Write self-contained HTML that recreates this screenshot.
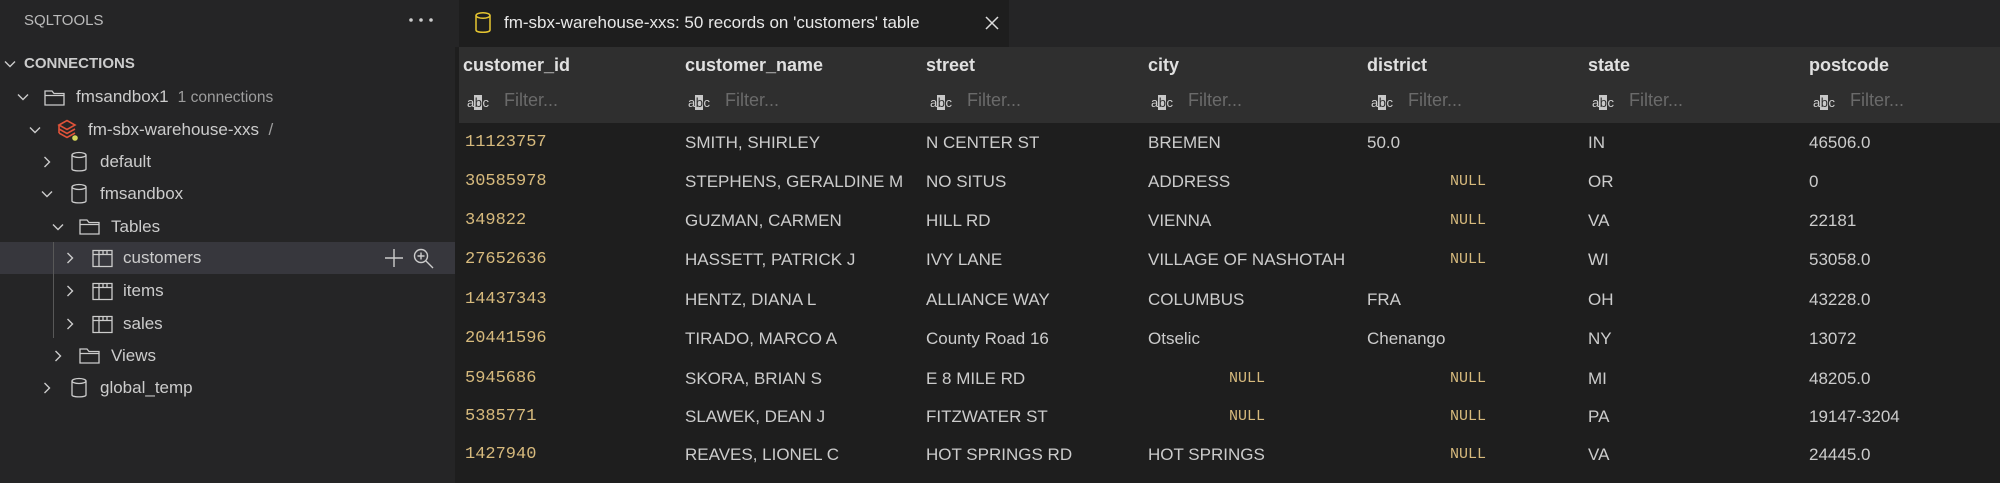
<!DOCTYPE html>
<html><head><meta charset="utf-8"><style>
*{margin:0;padding:0;box-sizing:border-box}
body{width:2000px;height:483px;overflow:hidden;background:#1e1e1e;font-family:"Liberation Sans",sans-serif;color:#cccccc;position:relative}
.a{position:absolute;white-space:nowrap}
#side{position:absolute;left:0;top:0;width:455px;height:483px;background:#252526}
.sr{position:absolute;left:0;width:455px;height:32px;font-size:17px;line-height:32px}
.t{position:absolute;top:0}
.chev{position:absolute;top:9px;width:14px;height:14px}
.ic{position:absolute;top:6px}
#tabbar{position:absolute;left:455px;top:0;width:1545px;height:47px;background:#252526}
#tab{position:absolute;left:459px;top:0;width:550px;height:47px;background:#1e1e1e}
#hdr{position:absolute;left:459px;top:47px;width:1541px;height:76px;background:#2f2f2f}
.hn{position:absolute;top:55px;font-weight:bold;font-size:18px;color:#e0e0e0}
.fi{position:absolute;top:90px;font-size:18px;color:#6a6a6a}
.abc{position:absolute;top:95px;font-size:13px;color:#cfcfcf;letter-spacing:-0.5px}
.abc b{font-weight:normal;background:#c8c8c8;color:#2f2f2f;padding:0 1px}
.c{position:absolute;font-size:17px;color:#cccccc}
.n{position:absolute;font-family:"Liberation Mono",monospace;font-size:17px;color:#d7ba7d}
.nl{position:absolute;font-family:"Liberation Mono",monospace;font-size:15px;color:#d7ba7d}
</style></head><body>
<div id="side">
  <div class="a" style="left:24px;top:12px;font-size:15px;color:#bbbbbb">SQLTOOLS</div>
  <svg class="a" style="left:408px;top:17px" width="26" height="6"><circle cx="3" cy="3" r="1.8" fill="#ccc"/><circle cx="13" cy="3" r="1.8" fill="#ccc"/><circle cx="23" cy="3" r="1.8" fill="#ccc"/></svg>

  <div class="sr" style="top:48px">
    <svg class="chev" style="left:3px" viewBox="0 0 14 14"><path d="M2 4.5 L7 9.5 L12 4.5" stroke="#ccc" stroke-width="1.4" fill="none"/></svg>
    <div class="t" style="left:24px;font-size:15px;font-weight:bold;color:#cccccc">CONNECTIONS</div>
  </div>
  <div class="sr" style="top:81px">
    <svg class="chev" style="left:16px" viewBox="0 0 14 14"><path d="M2 4.5 L7 9.5 L12 4.5" stroke="#ccc" stroke-width="1.4" fill="none"/></svg>
    <svg class="ic" style="left:44px;top:8px" width="22" height="18" viewBox="0 0 22 18"><path d="M1 2 H8 L10 4.5 H20 V16 H1 Z M1 6.5 H20" stroke="#ccc" stroke-width="1.3" fill="none"/></svg>
    <div class="t" style="left:76px">fmsandbox1 <span style="color:#9d9d9d;font-size:15.5px">&nbsp;1 connections</span></div>
  </div>
  <div class="sr" style="top:114px">
    <svg class="chev" style="left:28px" viewBox="0 0 14 14"><path d="M2 4.5 L7 9.5 L12 4.5" stroke="#ccc" stroke-width="1.4" fill="none"/></svg>
    <svg class="ic" style="left:56px;top:4px" width="24" height="24" viewBox="0 0 24 24"><g stroke="#e0533a" stroke-width="1.6" fill="none"><path d="M3 7 L11 2.5 L19 7 L11 11.5 Z"/><path d="M3 11 L11 15.5 L19 11"/><path d="M3 15 L11 19.5 L19 15"/><path d="M3 7 V15"/></g><circle cx="19" cy="20" r="2.8" fill="#d4d45a"/></svg>
    <div class="t" style="left:88px">fm-sbx-warehouse-xxs <span style="color:#9d9d9d">&nbsp;/</span></div>
  </div>
  <div class="sr" style="top:146px">
    <svg class="chev" style="left:40px" viewBox="0 0 14 14"><path d="M4.5 2 L9.5 7 L4.5 12" stroke="#ccc" stroke-width="1.4" fill="none"/></svg>
    <svg class="ic" style="left:70px;top:5px" width="18" height="22" viewBox="0 0 18 22"><path d="M2 4 V18 C2 20.5 16 20.5 16 18 V4" stroke="#ccc" stroke-width="1.3" fill="none"/><ellipse cx="9" cy="4" rx="7" ry="2.5" stroke="#ccc" stroke-width="1.3" fill="none"/></svg>
    <div class="t" style="left:100px">default</div>
  </div>
  <div class="sr" style="top:178px">
    <svg class="chev" style="left:40px" viewBox="0 0 14 14"><path d="M2 4.5 L7 9.5 L12 4.5" stroke="#ccc" stroke-width="1.4" fill="none"/></svg>
    <svg class="ic" style="left:70px;top:5px" width="18" height="22" viewBox="0 0 18 22"><path d="M2 4 V18 C2 20.5 16 20.5 16 18 V4" stroke="#ccc" stroke-width="1.3" fill="none"/><ellipse cx="9" cy="4" rx="7" ry="2.5" stroke="#ccc" stroke-width="1.3" fill="none"/></svg>
    <div class="t" style="left:100px">fmsandbox</div>
  </div>
  <div class="sr" style="top:211px">
    <svg class="chev" style="left:51px" viewBox="0 0 14 14"><path d="M2 4.5 L7 9.5 L12 4.5" stroke="#ccc" stroke-width="1.4" fill="none"/></svg>
    <svg class="ic" style="left:79px;top:7px" width="22" height="18" viewBox="0 0 22 18"><path d="M1 2 H8 L10 4.5 H20 V16 H1 Z M1 6.5 H20" stroke="#ccc" stroke-width="1.3" fill="none"/></svg>
    <div class="t" style="left:111px">Tables</div>
  </div>
  <div class="sr" style="top:242px;background:#37373d">
    <svg class="chev" style="left:63px" viewBox="0 0 14 14"><path d="M4.5 2 L9.5 7 L4.5 12" stroke="#ccc" stroke-width="1.4" fill="none"/></svg>
    <svg class="ic" style="left:92px;top:7px" width="22" height="19" viewBox="0 0 22 19"><path d="M1 1.5 H20 V17.5 H1 Z M1 5.5 H20 M7 1.5 V17.5 M11 1.5 V5.5 M15 1.5 V5.5" stroke="#ccc" stroke-width="1.3" fill="none"/></svg>
    <div class="t" style="left:123px">customers</div>
    <svg class="a" style="left:384px;top:6px" width="20" height="20" viewBox="0 0 20 20"><path d="M10 1 V19 M1 10 H19" stroke="#ccc" stroke-width="1.4"/></svg>
    <svg class="a" style="left:412px;top:5px" width="24" height="24" viewBox="0 0 24 24"><circle cx="9" cy="9" r="6.5" stroke="#ccc" stroke-width="1.4" fill="none"/><path d="M9 5.5 V12.5 M5.5 9 H12.5 M14 14 L21 21" stroke="#ccc" stroke-width="1.4"/></svg>
  </div>
  <div class="a" style="left:53px;top:242px;width:1px;height:96px;background:#585858"></div>
  <div class="sr" style="top:275px">
    <svg class="chev" style="left:63px" viewBox="0 0 14 14"><path d="M4.5 2 L9.5 7 L4.5 12" stroke="#ccc" stroke-width="1.4" fill="none"/></svg>
    <svg class="ic" style="left:92px;top:7px" width="22" height="19" viewBox="0 0 22 19"><path d="M1 1.5 H20 V17.5 H1 Z M1 5.5 H20 M7 1.5 V17.5 M11 1.5 V5.5 M15 1.5 V5.5" stroke="#ccc" stroke-width="1.3" fill="none"/></svg>
    <div class="t" style="left:123px">items</div>
  </div>
  <div class="sr" style="top:308px">
    <svg class="chev" style="left:63px" viewBox="0 0 14 14"><path d="M4.5 2 L9.5 7 L4.5 12" stroke="#ccc" stroke-width="1.4" fill="none"/></svg>
    <svg class="ic" style="left:92px;top:7px" width="22" height="19" viewBox="0 0 22 19"><path d="M1 1.5 H20 V17.5 H1 Z M1 5.5 H20 M7 1.5 V17.5 M11 1.5 V5.5 M15 1.5 V5.5" stroke="#ccc" stroke-width="1.3" fill="none"/></svg>
    <div class="t" style="left:123px">sales</div>
  </div>
  <div class="sr" style="top:340px">
    <svg class="chev" style="left:51px" viewBox="0 0 14 14"><path d="M4.5 2 L9.5 7 L4.5 12" stroke="#ccc" stroke-width="1.4" fill="none"/></svg>
    <svg class="ic" style="left:79px;top:7px" width="22" height="18" viewBox="0 0 22 18"><path d="M1 2 H8 L10 4.5 H20 V16 H1 Z M1 6.5 H20" stroke="#ccc" stroke-width="1.3" fill="none"/></svg>
    <div class="t" style="left:111px">Views</div>
  </div>
  <div class="sr" style="top:372px">
    <svg class="chev" style="left:40px" viewBox="0 0 14 14"><path d="M4.5 2 L9.5 7 L4.5 12" stroke="#ccc" stroke-width="1.4" fill="none"/></svg>
    <svg class="ic" style="left:70px;top:5px" width="18" height="22" viewBox="0 0 18 22"><path d="M2 4 V18 C2 20.5 16 20.5 16 18 V4" stroke="#ccc" stroke-width="1.3" fill="none"/><ellipse cx="9" cy="4" rx="7" ry="2.5" stroke="#ccc" stroke-width="1.3" fill="none"/></svg>
    <div class="t" style="left:100px">global_temp</div>
  </div>
</div>

<div id="tabbar"></div>
<div id="tab">
  <svg class="a" style="left:15px;top:11px" width="18" height="24" viewBox="0 0 18 24"><path d="M2 4.5 V19 C2 22 16 22 16 19 V4.5" stroke="#e5c531" stroke-width="1.5" fill="none"/><ellipse cx="9" cy="4.5" rx="7" ry="2.8" stroke="#e5c531" stroke-width="1.5" fill="none"/></svg>
  <div class="a" style="left:45px;top:13px;font-size:17px;color:#e8e8e8">fm-sbx-warehouse-xxs: 50 records on 'customers' table</div>
  <svg class="a" style="left:526px;top:16px" width="14" height="14" viewBox="0 0 14 14"><path d="M1 1 L13 13 M13 1 L1 13" stroke="#ddd" stroke-width="1.5"/></svg>
</div>

<div id="hdr"></div>
<div class="hn" style="left:463px">customer_id</div>
<div class="hn" style="left:685px">customer_name</div>
<div class="hn" style="left:926px">street</div>
<div class="hn" style="left:1148px">city</div>
<div class="hn" style="left:1367px">district</div>
<div class="hn" style="left:1588px">state</div>
<div class="hn" style="left:1809px">postcode</div>

<div class="abc" style="left:467px">a<b>b</b>c</div><div class="fi" style="left:504px">Filter...</div>
<div class="abc" style="left:688px">a<b>b</b>c</div><div class="fi" style="left:725px">Filter...</div>
<div class="abc" style="left:930px">a<b>b</b>c</div><div class="fi" style="left:967px">Filter...</div>
<div class="abc" style="left:1151px">a<b>b</b>c</div><div class="fi" style="left:1188px">Filter...</div>
<div class="abc" style="left:1371px">a<b>b</b>c</div><div class="fi" style="left:1408px">Filter...</div>
<div class="abc" style="left:1592px">a<b>b</b>c</div><div class="fi" style="left:1629px">Filter...</div>
<div class="abc" style="left:1813px">a<b>b</b>c</div><div class="fi" style="left:1850px">Filter...</div>

<div class="n" style="left:465px;top:133px">11123757</div><div class="c" style="left:685px;top:133px">SMITH, SHIRLEY</div><div class="c" style="left:926px;top:133px">N CENTER ST</div><div class="c" style="left:1148px;top:133px">BREMEN</div><div class="c" style="left:1367px;top:133px">50.0</div><div class="c" style="left:1588px;top:133px">IN</div><div class="c" style="left:1809px;top:133px">46506.0</div>

<div class="n" style="left:465px;top:172px">30585978</div><div class="c" style="left:685px;top:172px">STEPHENS, GERALDINE M</div><div class="c" style="left:926px;top:172px">NO SITUS</div><div class="c" style="left:1148px;top:172px">ADDRESS</div><div class="nl" style="left:1450px;top:173px">NULL</div><div class="c" style="left:1588px;top:172px">OR</div><div class="c" style="left:1809px;top:172px">0</div>

<div class="n" style="left:465px;top:211px">349822</div><div class="c" style="left:685px;top:211px">GUZMAN, CARMEN</div><div class="c" style="left:926px;top:211px">HILL RD</div><div class="c" style="left:1148px;top:211px">VIENNA</div><div class="nl" style="left:1450px;top:212px">NULL</div><div class="c" style="left:1588px;top:211px">VA</div><div class="c" style="left:1809px;top:211px">22181</div>

<div class="n" style="left:465px;top:250px">27652636</div><div class="c" style="left:685px;top:250px">HASSETT, PATRICK J</div><div class="c" style="left:926px;top:250px">IVY LANE</div><div class="c" style="left:1148px;top:250px">VILLAGE OF NASHOTAH</div><div class="nl" style="left:1450px;top:251px">NULL</div><div class="c" style="left:1588px;top:250px">WI</div><div class="c" style="left:1809px;top:250px">53058.0</div>

<div class="n" style="left:465px;top:290px">14437343</div><div class="c" style="left:685px;top:290px">HENTZ, DIANA L</div><div class="c" style="left:926px;top:290px">ALLIANCE WAY</div><div class="c" style="left:1148px;top:290px">COLUMBUS</div><div class="c" style="left:1367px;top:290px">FRA</div><div class="c" style="left:1588px;top:290px">OH</div><div class="c" style="left:1809px;top:290px">43228.0</div>

<div class="n" style="left:465px;top:329px">20441596</div><div class="c" style="left:685px;top:329px">TIRADO, MARCO A</div><div class="c" style="left:926px;top:329px">County Road 16</div><div class="c" style="left:1148px;top:329px">Otselic</div><div class="c" style="left:1367px;top:329px">Chenango</div><div class="c" style="left:1588px;top:329px">NY</div><div class="c" style="left:1809px;top:329px">13072</div>

<div class="n" style="left:465px;top:369px">5945686</div><div class="c" style="left:685px;top:369px">SKORA, BRIAN S</div><div class="c" style="left:926px;top:369px">E 8 MILE RD</div><div class="nl" style="left:1229px;top:370px">NULL</div><div class="nl" style="left:1450px;top:370px">NULL</div><div class="c" style="left:1588px;top:369px">MI</div><div class="c" style="left:1809px;top:369px">48205.0</div>

<div class="n" style="left:465px;top:407px">5385771</div><div class="c" style="left:685px;top:407px">SLAWEK, DEAN J</div><div class="c" style="left:926px;top:407px">FITZWATER ST</div><div class="nl" style="left:1229px;top:408px">NULL</div><div class="nl" style="left:1450px;top:408px">NULL</div><div class="c" style="left:1588px;top:407px">PA</div><div class="c" style="left:1809px;top:407px">19147-3204</div>

<div class="n" style="left:465px;top:445px">1427940</div><div class="c" style="left:685px;top:445px">REAVES, LIONEL C</div><div class="c" style="left:926px;top:445px">HOT SPRINGS RD</div><div class="c" style="left:1148px;top:445px">HOT SPRINGS</div><div class="nl" style="left:1450px;top:446px">NULL</div><div class="c" style="left:1588px;top:445px">VA</div><div class="c" style="left:1809px;top:445px">24445.0</div>
</body></html>
